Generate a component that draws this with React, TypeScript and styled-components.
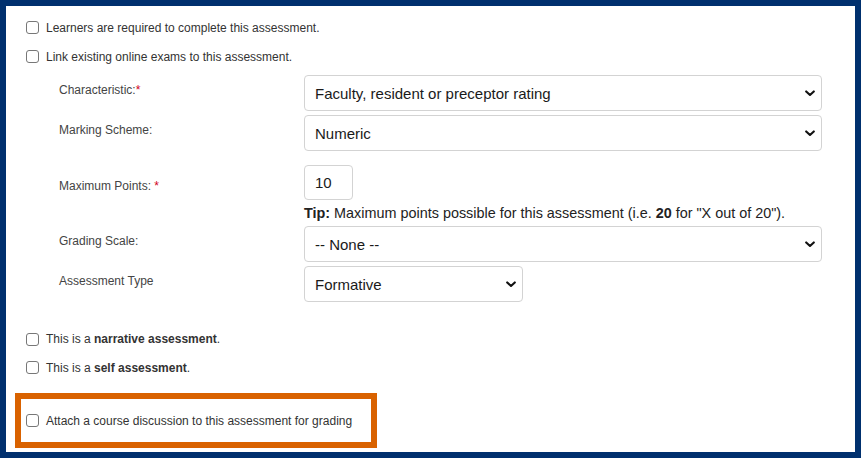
import React from "react";
import styled, { createGlobalStyle } from "styled-components";

const Global = createGlobalStyle`
  html, body { margin: 0; padding: 0; background: #00306e; }
  body { font-family: "Liberation Sans", Arial, sans-serif; }
  * { box-sizing: border-box; }
`;

const Frame = styled.div`
  width: 861px;
  height: 458px;
  background: #00306e;
  padding: 6px;
`;

const Panel = styled.div`
  height: 100%;
  background: #ffffff;
  padding: 8px 33px 0 20px;
  display: flex;
  flex-direction: column;
`;

const CheckRow = styled.label<{ $h: number; $mt?: number }>`
  display: flex;
  align-items: center;
  gap: 7px;
  height: ${(p) => p.$h}px;
  margin-top: ${(p) => p.$mt ?? 0}px;
  font-size: 12px;
  color: #333;
`;

const Box = styled.span`
  width: 13px;
  height: 13px;
  border: 1px solid #777;
  border-radius: 3px;
  background: #fff;
  flex: none;
`;

const FormGrid = styled.div`
  display: grid;
  grid-template-columns: 245px 1fr;
  row-gap: 4px;
  margin: 3px 0 0 33px;
`;

const Label = styled.div<{ $pad: number }>`
  font-size: 12px;
  line-height: 17px;
  color: #444;
  padding-top: ${(p) => p.$pad}px;
`;

const Req = styled.span`
  color: #d0021b;
`;

const Control = styled.div<{ $mt?: number }>`
  margin-top: ${(p) => p.$mt ?? 0}px;
  display: flex;
  flex-direction: column;
`;

const SelectBox = styled.div<{ $w?: number }>`
  position: relative;
  width: ${(p) => (p.$w ? `${p.$w}px` : "100%")};
  height: 36px;
  border: 1px solid #d3d3d3;
  border-radius: 4px;
  background: #fff;
  display: flex;
  align-items: center;
  padding: 0 10px;
  font-size: 15px;
  color: #1a1a1a;
`;

const Chevron = styled.svg`
  position: absolute;
  right: 6px;
  top: 50%;
  margin-top: -3px;
`;

const NumberBox = styled.div`
  width: 49px;
  height: 35px;
  border: 1px solid #d3d3d3;
  border-radius: 4px;
  display: flex;
  align-items: center;
  padding: 0 10px;
  font-size: 15px;
  color: #1a1a1a;
`;

const Tip = styled.div`
  font-size: 14.4px;
  line-height: 16px;
  color: #222;
  margin-top: 5px;
  margin-bottom: 1px;
  white-space: nowrap;
`;

const Highlight = styled.div`
  margin: 11px 0 0 -11px;
  width: 362px;
  height: 55px;
  border: 6px solid #d96200;
  padding: 0 0 0 5px;
  display: flex;
  align-items: center;
`;

const Select = ({ value, w }: { value: string; w?: number }) => (
  <SelectBox $w={w}>
    {value}
    <Chevron width="10" height="7" viewBox="0 0 10 7">
      <path d="M1.2 1.4 L5 5 L8.8 1.4" fill="none" stroke="#111" strokeWidth="2.1" strokeLinecap="round" strokeLinejoin="round" />
    </Chevron>
  </SelectBox>
);

export default function App() {
  return (
    <>
      <Global />
      <Frame>
        <Panel>
          <CheckRow $h={27}>
            <Box />
            Learners are required to complete this assessment.
          </CheckRow>
          <CheckRow $h={31}>
            <Box />
            Link existing online exams to this assessment.
          </CheckRow>
          <FormGrid>
            <Label $pad={7}>
              Characteristic:<Req>*</Req>
            </Label>
            <Control>
              <Select value="Faculty, resident or preceptor rating" />
            </Control>
            <Label $pad={7}>Marking Scheme:</Label>
            <Control>
              <Select value="Numeric" />
            </Control>
            <Label $pad={23}>
              Maximum Points: <Req>*</Req>
            </Label>
            <Control $mt={10}>
              <NumberBox>10</NumberBox>
              <Tip>
                <b>Tip:</b> Maximum points possible for this assessment (i.e. <b>20</b> for "X out of 20").
              </Tip>
            </Control>
            <Label $pad={7}>Grading Scale:</Label>
            <Control>
              <Select value="-- None --" />
            </Control>
            <Label $pad={7}>Assessment Type</Label>
            <Control>
              <Select value="Formative" w={219} />
            </Control>
          </FormGrid>
          <CheckRow $h={28} $mt={23}>
            <Box />
            <span>
              This is a <b>narrative assessment</b>.
            </span>
          </CheckRow>
          <CheckRow $h={29}>
            <Box />
            <span>
              This is a <b>self assessment</b>.
            </span>
          </CheckRow>
          <Highlight>
            <CheckRow $h={30}>
              <Box />
              Attach a course discussion to this assessment for grading
            </CheckRow>
          </Highlight>
        </Panel>
      </Frame>
    </>
  );
}
